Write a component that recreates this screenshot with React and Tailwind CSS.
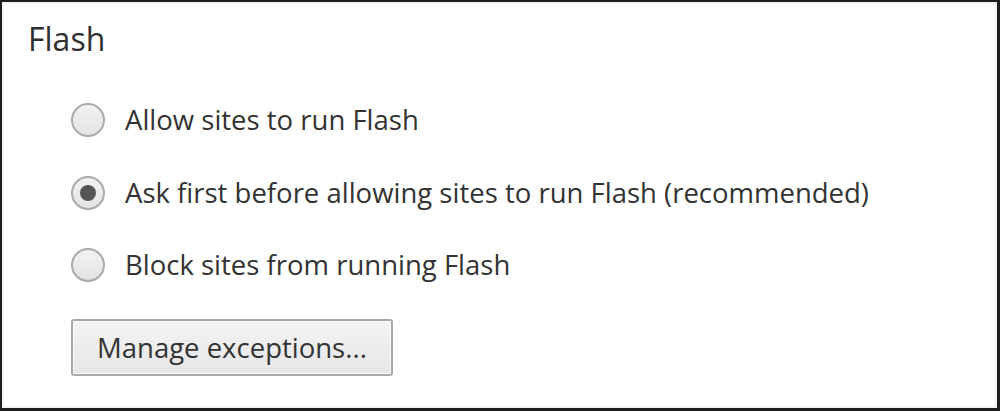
import React, { useState } from 'react';

const options = [
  { id: 'allow', label: 'Allow sites to run Flash' },
  { id: 'ask', label: 'Ask first before allowing sites to run Flash (recommended)' },
  { id: 'block', label: 'Block sites from running Flash' },
];

const Radio = ({ checked }) => (
  <span className="w-[34px] h-[34px] rounded-full border-2 border-[#ababab] bg-gradient-to-b from-[#f2f2f2] to-[#e4e4e4] flex items-center justify-center shrink-0">
    {checked && <span className="w-[16px] h-[16px] rounded-full bg-[#555555]" />}
  </span>
);

export default function App() {
  const [value, setValue] = useState('ask');

  return (
    <div className="w-[1000px] h-[411px] bg-[#1e1e1e] pt-[2px] pl-[2px] pr-[3px] pb-[3px]" style={{ fontFamily: '"Open Sans", "Noto Sans", sans-serif' }}>
      <div className="w-full h-full bg-white border-2 border-[#f4f4f4] pl-[24px] pt-[15px]">
        <h2 className="text-[32px] leading-[40px] text-[#303030] font-normal">Flash</h2>

        <div className="flex flex-col gap-[38.5px] pl-[43px] mt-[44px]">
          {options.map((o) => (
            <label key={o.id} className="flex items-center gap-[20px] cursor-pointer h-[34px]" onClick={() => setValue(o.id)}>
              <Radio checked={value === o.id} />
              <span className="text-[27.5px] text-[#333333] whitespace-nowrap">{o.label}</span>
            </label>
          ))}
        </div>

        <button className="ml-[43px] mt-[37px] w-[322px] h-[57px] rounded-[3px] border-2 border-[#a9a9a9] bg-gradient-to-b from-[#f4f4f4] to-[#e6e6e6] shadow-[inset_0_0_0_1px_#fafafa] text-[27.5px] text-[#333333] text-left pl-[24px] whitespace-nowrap">
          Manage exceptions...
        </button>
      </div>
    </div>
  );
}
